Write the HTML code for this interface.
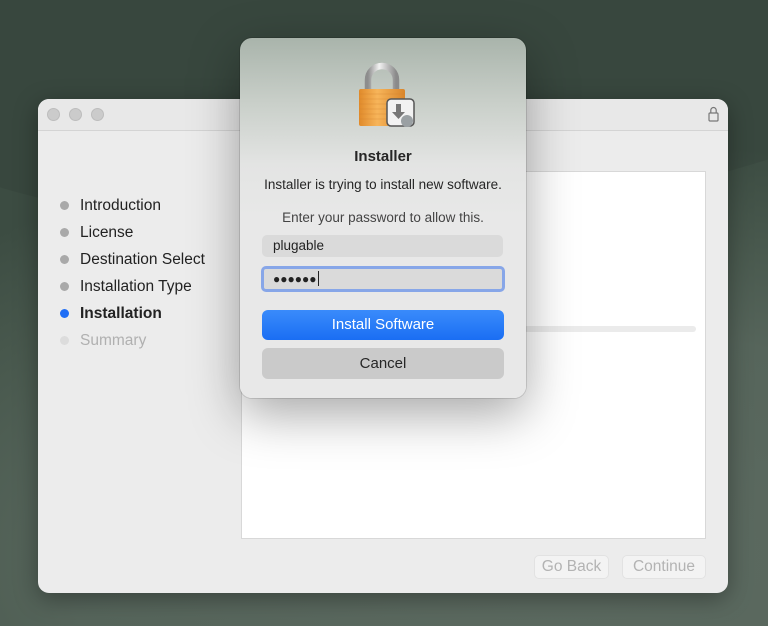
<!DOCTYPE html>
<html><head><style>
*{margin:0;padding:0;box-sizing:border-box}
body{width:768px;height:626px;overflow:hidden;font-family:"Liberation Sans",sans-serif;position:relative;
background:radial-gradient(ellipse 900px 420px at 560px 560px,#5d6b61 0%,#56655b 55%,#4a5a4f 75%,#3c4c42 100%);}
.win{position:absolute;left:38px;top:99px;width:690px;height:494px;background:#ececec;border-radius:11px;box-shadow:0 6px 24px rgba(0,0,0,.35);overflow:hidden}
.tb{height:32px;border-bottom:1px solid #d4d4d4;background:#e8e8e8}
.light{position:absolute;top:9px;width:13px;height:13px;border-radius:50%;background:#cbcbcb;border:1px solid #bdbdbd}
.step{position:absolute;left:22px;font-size:15.5px;color:#222}
.step i{position:absolute;left:0;top:2px;width:9px;height:9px;border-radius:50%;background:#a9a9a9}
.step span{position:absolute;left:20px;top:-2px;white-space:nowrap}
.content{position:absolute;left:203px;top:72px;width:465px;height:368px;background:#fff;border:1px solid #d8d8d8}
.btn{position:absolute;top:456px;height:24px;border-radius:5px;background:#f3f3f3;border:1px solid #e2e2e2;color:#b3b3b3;font-size:15.5px;text-align:center;line-height:22px}
.dlg{position:absolute;left:240px;top:38px;width:286px;height:360px;border-radius:12px;
background:linear-gradient(#a9b4ab 0%,#c9cfc9 18%,#e3e4e3 35%,#e8e8e8 50%);box-shadow:0 16px 50px rgba(0,0,0,.35),0 0 0 1px rgba(0,0,0,.12)}
.c{position:absolute;left:0;width:100%;text-align:center;color:#262626}
.field{position:absolute;left:22px;width:241px;height:22px;border-radius:5px;background:#dadada;font-size:13.5px;color:#222;padding-left:11px;line-height:22px}
</style></head><body>
<div style="position:absolute;left:-200px;top:-300px;width:1300px;height:520px;border-radius:50%;background:rgba(0,0,0,0.06);transform:rotate(-6deg)"></div>

<div class="win">
 <div class="tb"></div>
 <div class="light" style="left:9px"></div><div class="light" style="left:31px"></div><div class="light" style="left:53px"></div>
 <svg style="position:absolute;left:670px;top:7px" width="11" height="16" viewBox="0 0 11 16"><rect x="1" y="7" width="9" height="8" rx="1" fill="none" stroke="#777" stroke-width="1.2"/><path d="M2.8 7V4.2a2.7 2.7 0 0 1 5.4 0V7" fill="none" stroke="#777" stroke-width="1.2"/></svg>
 <div class="step" style="top:100px"><i></i><span>Introduction</span></div>
 <div class="step" style="top:127px"><i></i><span>License</span></div>
 <div class="step" style="top:154px"><i></i><span>Destination Select</span></div>
 <div class="step" style="top:181px"><i></i><span>Installation Type</span></div>
 <div class="step" style="top:208px;font-weight:bold"><i style="background:#1f6ef5"></i><span>Installation</span></div>
 <div class="step" style="top:235px;color:#b0b0b0"><i style="background:#dcdcdc"></i><span>Summary</span></div>
 <div class="content"><div style="position:absolute;left:282px;top:154px;width:172px;height:6px;border-radius:3px;background:#ebebeb"></div></div>
 <div class="btn" style="left:496px;width:75px">Go Back</div>
 <div class="btn" style="left:584px;width:84px">Continue</div>
</div>

<div class="dlg">
 <svg style="position:absolute;left:117px;top:23px" width="62" height="68" viewBox="0 0 62 68">
  <defs><linearGradient id="sh" x1="0" x2="1"><stop offset="0" stop-color="#8d8d8d"/><stop offset=".4" stop-color="#f2f2f2"/><stop offset="1" stop-color="#8a8a8a"/></linearGradient>
  <linearGradient id="bd" x1="0" x2="1"><stop offset="0" stop-color="#e08a2a"/><stop offset=".4" stop-color="#f7b55a"/><stop offset="1" stop-color="#d9852a"/></linearGradient></defs>
  <path d="M11 30V19a14 14 0 0 1 28 0v11" fill="none" stroke="url(#sh)" stroke-width="6.5"/>
  <rect x="2" y="28" width="46" height="37" rx="2" fill="url(#bd)"/>
  <g stroke="#d08030" stroke-width=".6" opacity=".6"><line x1="2" y1="33" x2="48" y2="33"/><line x1="2" y1="38" x2="48" y2="38"/><line x1="2" y1="43" x2="48" y2="43"/><line x1="2" y1="48" x2="48" y2="48"/><line x1="2" y1="53" x2="48" y2="53"/><line x1="2" y1="58" x2="48" y2="58"/></g>
  <rect x="30" y="38" width="27" height="27" rx="4" fill="#f2f2f2" stroke="#555" stroke-width="1.5"/>
  <path d="M39 43h5v8h4l-6.5 7-6.5-7h4z" fill="#777"/>
  <circle cx="50" cy="60" r="6" fill="#9aa0a3"/>
 </svg>
 <div class="c" style="top:110px;font-size:15px;font-weight:bold">Installer</div>
 <div class="c" style="top:139px;font-size:13.5px">Installer is trying to install new software.</div>
 <div class="c" style="top:172px;font-size:13.5px;color:#444">Enter your password to allow this.</div>
 <div class="field" style="top:197px">plugable</div>
 <div class="field" style="top:228px;left:21px;width:244px;height:26px;border:3px solid #87a6e8;line-height:20px;padding-left:9px;font-size:12px;letter-spacing:0;font-weight:bold">●●●●●●<span style="display:inline-block;width:1.5px;height:15px;background:#222;vertical-align:-3px;margin-left:1px"></span></div>
 <div style="position:absolute;left:22px;top:272px;width:242px;height:30px;border-radius:6px;background:linear-gradient(#3a8bfb,#1a6ef3);color:#fff;text-align:center;line-height:30px;font-size:15px">Install Software</div>
 <div style="position:absolute;left:22px;top:310px;width:242px;height:31px;border-radius:6px;background:#cacaca;color:#262626;text-align:center;line-height:31px;font-size:15px">Cancel</div>
</div>
</body></html>
